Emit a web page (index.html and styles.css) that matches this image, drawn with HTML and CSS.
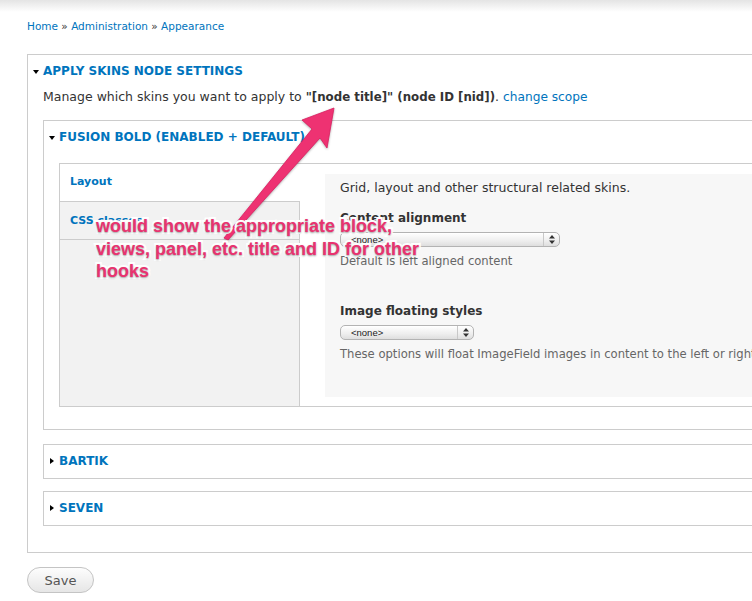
FILE: index.html
```html
<!DOCTYPE html>
<html>
<head>
    <title>Appearance | Skinr</title>
    <link rel="stylesheet" href="styles.css">
</head>
<body>
    <div class="page">
        <div class="breadcrumb">
            <a href="#">Home</a> » <a href="#">Administration</a> » <a href="#">Appearance</a>
        </div>

        <form class="skins-form">
            <div class="fieldset outer">
                <div class="legend"><span class="arrow-down"></span><a href="#">Apply skins node settings</a></div>
                <p class="description-main">Manage which skins you want to apply to <strong>"[node title]" (node ID [nid])</strong>. <a href="#">change scope</a></p>

                <div class="fieldset theme open">
                    <div class="legend"><span class="arrow-down"></span><a href="#">Fusion Bold (enabled + default)</a></div>

                    <div class="vertical-tabs">
                        <ul class="tab-list">
                            <li class="tab selected"><a href="#">Layout</a></li>
                            <li class="tab"><a href="#">CSS classes</a></li>
                        </ul>
                        <div class="tab-pane">
                            <div class="panel">
                                <p class="panel-intro">Grid, layout and other structural related skins.</p>

                                <div class="form-item">
                                    <label>Content alignment</label>
                                    <div class="select wide">
                                        <span class="select-value">&lt;none&gt;</span>
                                        <span class="select-arrows">
                                            <svg width="6" height="9" viewBox="0 0 6 9"><path d="M3 0L6 3.5H0Z M3 9L0 5.5H6Z" fill="#333"/></svg>
                                        </span>
                                    </div>
                                    <div class="description">Default is left aligned content</div>
                                </div>

                                <div class="form-item">
                                    <label>Image floating styles</label>
                                    <div class="select narrow">
                                        <span class="select-value">&lt;none&gt;</span>
                                        <span class="select-arrows">
                                            <svg width="6" height="9" viewBox="0 0 6 9"><path d="M3 0L6 3.5H0Z M3 9L0 5.5H6Z" fill="#333"/></svg>
                                        </span>
                                    </div>
                                    <div class="description">These options will float ImageField images in content to the left or right.</div>
                                </div>
                            </div>
                        </div>
                    </div>
                </div>

                <div class="fieldset theme collapsed">
                    <div class="legend"><span class="arrow-right"></span><a href="#">Bartik</a></div>
                </div>

                <div class="fieldset theme collapsed">
                    <div class="legend"><span class="arrow-right"></span><a href="#">Seven</a></div>
                </div>
            </div>

            <button type="button" class="button">Save</button>
        </form>

        <!-- screenshot annotation -->
        <div class="annotation">
            <svg class="annotation-arrow" width="752" height="601" viewBox="0 0 752 601">
                <path d="M334 108 L302 120 L312 129 L224 238 L228 240 L320 138 L327 148 Z" fill="#ee3272" stroke="#d91e5f" stroke-width="0.8" stroke-linejoin="round"/>
            </svg>
            <div class="annotation-text">would show the appropriate block,<br>views, panel, etc. title and ID for other<br>hooks</div>
        </div>
    </div>
</body>
</html>
```

FILE: styles.css
```css
html, body {
    margin: 0;
    padding: 0;
}

body {
    font-family: "DejaVu Sans", Verdana, sans-serif;
    font-size: 12.5px;
    color: #333;
    background: linear-gradient(#e4e4e4, #ffffff 12px) no-repeat #fff;
    overflow: hidden;
}

a {
    color: #0074bd;
    text-decoration: none;
}

.page {
    position: relative;
    width: 752px;
    height: 601px;
    padding: 18px 0 0 27px;
    box-sizing: border-box;
    overflow: hidden;
}

.breadcrumb {
    font-size: 10.5px;
    line-height: 16px;
    color: #333;
}

.skins-form {
    width: 820px;
    margin-top: 20px;
}

.fieldset {
    border: 1px solid #ccc;
    background: #fff;
}

.fieldset.outer {
    padding: 0 0 26px 15px;
}

.legend {
    position: relative;
    font-size: 12px;
    font-weight: bold;
    text-transform: uppercase;
    line-height: 16px;
    padding-top: 8px;
}

.arrow-down,
.arrow-right {
    position: absolute;
    width: 0;
    height: 0;
}

.arrow-down {
    left: -10px;
    top: 15px;
    border-left: 3px solid transparent;
    border-right: 3px solid transparent;
    border-top: 4px solid #000;
}

.arrow-right {
    left: -9px;
    top: 13px;
    border-top: 3px solid transparent;
    border-bottom: 3px solid transparent;
    border-left: 4px solid #000;
}

.description-main {
    margin: 9px 0 14px;
    line-height: 18px;
}

.description-main strong {
    font-size: 11.8px;
}

.description-main a {
    font-size: 12.2px;
}

.fieldset.theme {
    padding: 0 0 0 15px;
    margin-bottom: 12px;
}

.fieldset.theme:last-child {
    margin-bottom: 0;
}

.fieldset.open {
    padding-bottom: 22px;
    margin-bottom: 14px;
}

.fieldset.collapsed {
    height: 35px;
    box-sizing: border-box;
}

.vertical-tabs {
    display: flex;
    margin-top: 18px;
    border: 1px solid #ccc;
    height: 244px;
    box-sizing: border-box;
}

.tab-list {
    list-style: none;
    margin: 0;
    padding: 0;
    width: 239px;
    flex: none;
    background: #f2f2f2;
    border-right: 1px solid #ccc;
}

.tab {
    padding: 9px 10px;
    line-height: 19px;
    font-size: 11px;
    font-weight: bold;
    border-bottom: 1px solid #ccc;
}

.tab.selected {
    background: #fff;
    margin-right: -1px;
    padding-top: 8px;
    padding-bottom: 10px;
}

.tab-pane {
    flex: 1;
    padding: 10px 0 9px 25px;
}

.panel {
    height: 100%;
    box-sizing: border-box;
    background: #f7f7f7;
    padding: 5px 15px;
}

.panel-intro {
    margin: 0 0 12px;
    line-height: 18px;
}

.form-item {
    margin-bottom: 33px;
}

.form-item label {
    display: block;
    font-size: 12px;
    font-weight: bold;
    line-height: 18px;
    margin-bottom: 5px;
}

.select {
    display: flex;
    align-items: center;
    height: 15px;
    box-sizing: border-box;
    border: 1px solid #b3b3b3;
    border-radius: 5px;
    background: linear-gradient(#ffffff, #eeeeee 60%, #dedede);
    box-shadow: inset 0 1px 0 #fff;
}

.select.wide {
    width: 220px;
}

.select.narrow {
    width: 134px;
}

.select-value {
    flex: 1;
    padding-left: 10px;
    font-family: "Liberation Sans", Arial, sans-serif;
    font-size: 9.5px;
    line-height: 13px;
    color: #222;
}

.select-arrows {
    width: 15px;
    height: 13px;
    display: flex;
    align-items: center;
    justify-content: center;
    border-left: 1px solid #c8c8c8;
}

.description {
    font-size: 11.6px;
    line-height: 16px;
    color: #666;
    margin-top: 6px;
    white-space: nowrap;
}

.button {
    margin-top: 14px;
    width: 67px;
    height: 26px;
    border: 1px solid #c4c4c4;
    border-radius: 13px;
    background: linear-gradient(#fdfdfd, #e6e6e6);
    font-family: "DejaVu Sans", Verdana, sans-serif;
    font-size: 13px;
    color: #555;
    padding: 0;
}

.annotation {
    position: absolute;
    left: 0;
    top: 0;
    width: 752px;
    height: 601px;
    pointer-events: none;
}

.annotation-arrow {
    position: absolute;
    left: 0;
    top: 0;
    filter: drop-shadow(0 1px 1px rgba(0, 0, 0, 0.3));
}

.annotation-text {
    position: absolute;
    left: 96px;
    top: 215px;
    font-family: "Liberation Sans", Arial, sans-serif;
    font-weight: bold;
    font-size: 18px;
    line-height: 22.5px;
    color: #e8336f;
    -webkit-text-stroke: 4px #fff;
    paint-order: stroke fill;
    text-shadow: 0 1px 2px rgba(0, 0, 0, 0.4);
    white-space: nowrap;
}
```
